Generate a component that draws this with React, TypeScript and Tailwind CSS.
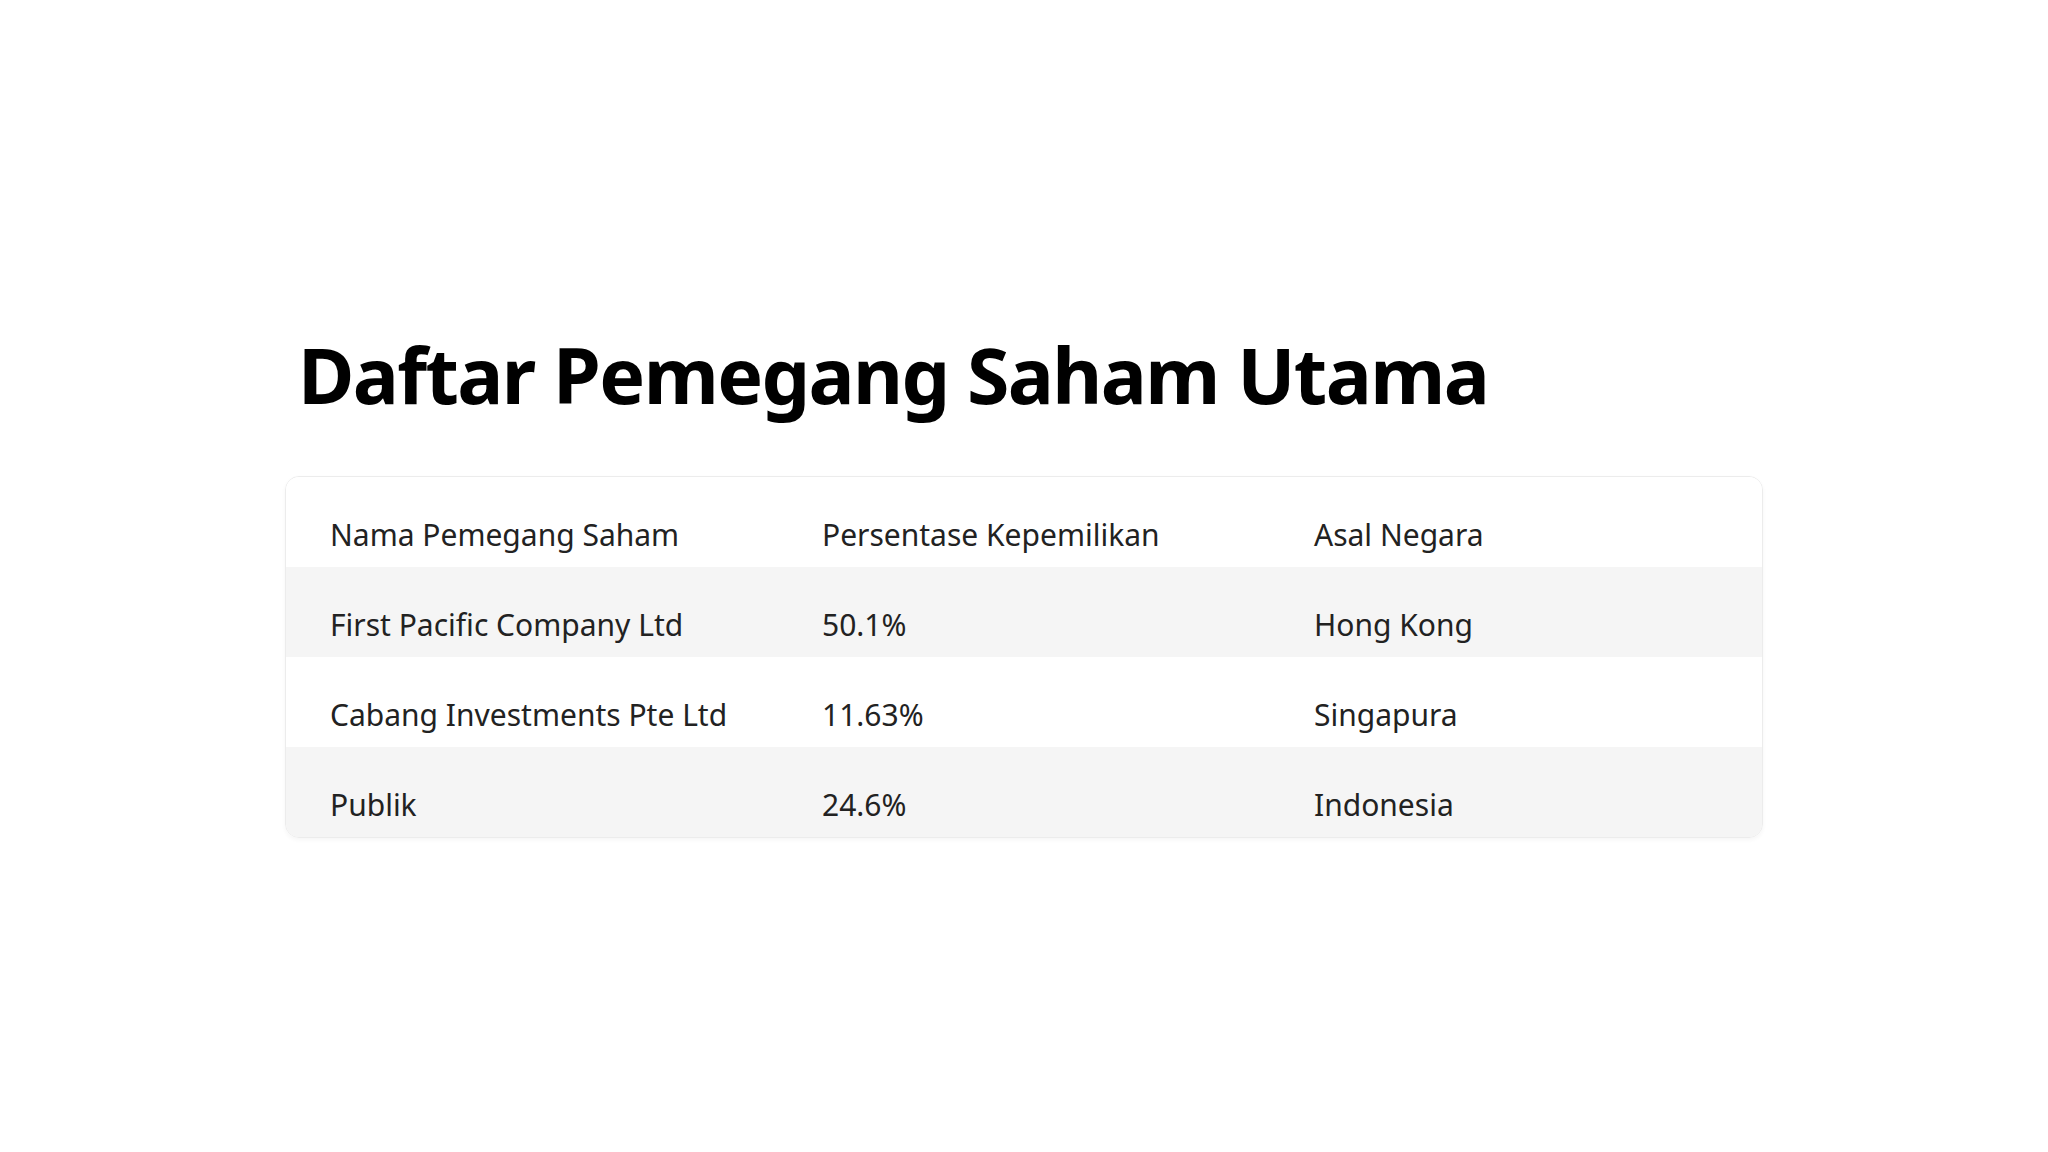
import React from 'react';

type Shareholder = {
  name: string;
  share: string;
  country: string;
};

const rows: Shareholder[] = [
  { name: 'First Pacific Company Ltd', share: '50.1%', country: 'Hong Kong' },
  { name: 'Cabang Investments Pte Ltd', share: '11.63%', country: 'Singapura' },
  { name: 'Publik', share: '24.6%', country: 'Indonesia' },
];

const Cell: React.FC<{ children: React.ReactNode }> = ({ children }) => (
  <div className="h-[90px] pt-[43px] pl-[44px] text-[30px] leading-[30px] text-[#222]">{children}</div>
);

export default function App() {
  return (
    <div className="min-h-screen w-full bg-white font-['Noto_Sans',sans-serif]">
      <div className="mx-auto w-[1478px] pt-[336px]">
        {/* Title */}
        <h1 className="pl-[13px] text-[77px] font-bold leading-[77px] tracking-[-1.6px] text-black">
          Daftar Pemegang Saham Utama
        </h1>

        {/* Table card */}
        <div className="mt-[63px] overflow-hidden rounded-[14px] border border-[#ececec] shadow-[0_2px_4px_rgba(0,0,0,0.04)]">
          <div className="grid grid-cols-3 bg-white">
            <Cell>Nama Pemegang Saham</Cell>
            <Cell>Persentase Kepemilikan</Cell>
            <Cell>Asal Negara</Cell>
          </div>
          {rows.map((r, i) => (
            <div key={r.name} className={`grid grid-cols-3 ${i % 2 === 0 ? 'bg-[#f5f5f5]' : 'bg-white'}`}>
              <Cell>{r.name}</Cell>
              <Cell>{r.share}</Cell>
              <Cell>{r.country}</Cell>
            </div>
          ))}
        </div>
      </div>
    </div>
  );
}
